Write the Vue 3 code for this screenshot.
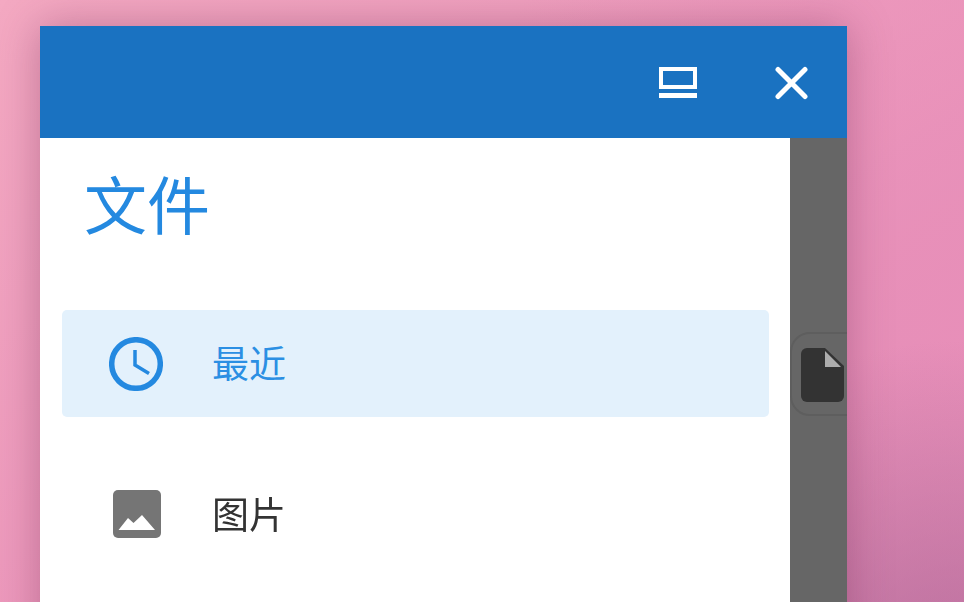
<script setup>
const items = [
  { label: "最近", active: true, icon: "clock" },
  { label: "图片", active: false, icon: "image" },
];
</script>

<template>
  <div class="desktop">
    <div class="window">
      <header class="titlebar">
        <button class="bar-btn dock" aria-label="dock">
          <svg width="40" height="34" viewBox="0 0 40 34" fill="none" stroke="#fff">
            <rect x="3" y="3" width="34" height="18" stroke-width="4" />
            <path d="M1 29.5h38" stroke-width="5" />
          </svg>
        </button>
        <button class="bar-btn close" aria-label="close">
          <svg width="34" height="34" viewBox="0 0 34 34" fill="none" stroke="#fff" stroke-width="5" stroke-linecap="round">
            <path d="M4 3.500l27 27M31 3.500L4 30.500" />
          </svg>
        </button>
      </header>
      <div class="body">
        <aside class="drawer">
          <h1 class="title">文件</h1>
          <ul class="menu">
            <li v-for="item in items" :key="item.label" class="row" :class="{ active: item.active }">
              <svg v-if="item.icon === 'clock'" class="icon" width="54" height="54" viewBox="0 0 54 54" fill="none" stroke="#2489e0">
                <circle cx="27" cy="27" r="24.3" stroke-width="5.500" />
                <path d="M26 13v15l14 8.500" stroke-width="3.500" />
              </svg>
              <svg v-else class="icon" width="54" height="54" viewBox="0 0 54 54">
                <rect x="4" y="2" width="48" height="48" rx="5" fill="#757575" />
                <path d="M9.500 42l9.500-12 5.500 5 8.500-8 13 15z" fill="#fff" />
              </svg>
              <span class="label">{{ item.label }}</span>
            </li>
          </ul>
        </aside>
        <main class="pane">
          <div class="file-card">
            <svg width="44" height="54" viewBox="0 0 44 54">
              <path d="M6 0h18l19 18v30a6 6 0 0 1-6 6H6a6 6 0 0 1-6-6V6a6 6 0 0 1 6-6z" fill="#333" />
              <path d="M24 3l16 16H24z" fill="#adadad" />
            </svg>
          </div>
        </main>
      </div>
    </div>
  </div>
</template>

<style>
html, body {
  margin: 0;
  overflow: hidden;
}
</style>

<style scoped>
.desktop {
  width: 964px;
  height: 602px;
  box-sizing: border-box;
  padding: 26px 117px 0 40px;
  overflow: hidden;
  background: radial-gradient(circle at 960px 700px, rgba(176, 104, 152, 0.8) 0, rgba(176, 104, 152, 0) 360px),
    radial-gradient(circle at 1000px 330px, #e88fb9 0%, rgba(232, 143, 185, 0) 55%),
    linear-gradient(150deg, #f4a9c2 0%, #ec98bc 55%, #d584ae 100%);
  font-family: "Liberation Sans", "Noto Sans CJK SC", sans-serif;
}
.window {
  width: 807px;
  height: 640px;
  box-shadow: 0 0 40px rgba(110, 40, 80, 0.38);
  display: flex;
  flex-direction: column;
  filter: blur(0.5px);
}
.titlebar {
  height: 112px;
  flex: none;
  background: #1a72c1;
  display: flex;
  justify-content: flex-end;
  align-items: center;
  padding-right: 39px;
}
.bar-btn {
  padding: 0;
  border: 0;
  background: none;
  display: flex;
}
.dock {
  margin-right: 76px;
  margin-top: 2px;
}
.close {
  margin-top: 2px;
}
.body {
  flex: 1;
  display: flex;
  min-height: 0;
}
.drawer {
  width: 750px;
  flex: none;
  background: #fff;
  box-sizing: border-box;
  padding: 0 21px 0 22px;
}
.title {
  margin: 0;
  padding: 31px 0 0 22px;
  height: 172px;
  box-sizing: border-box;
  font-size: 63px;
  line-height: 76px;
  font-weight: 400;
  color: #2489e0;
}
.menu {
  list-style: none;
  margin: 0;
  padding: 0;
  display: flex;
  flex-direction: column;
  gap: 44px;
}
.row {
  height: 107px;
  border-radius: 5px;
  display: flex;
  align-items: center;
  padding-left: 47px;
  color: #333;
}
.row.active {
  background: #e3f1fc;
  color: #2b8fe3;
}
.icon {
  flex: none;
}
.label {
  margin-left: 49px;
  padding-top: 4px;
  font-size: 37px;
  line-height: 44px;
}
.pane {
  flex: 1;
  background: #666;
  overflow: hidden;
  padding-top: 194px;
}
.file-card {
  width: 90px;
  height: 84px;
  box-sizing: border-box;
  border: 2px solid #5e5e5e;
  border-radius: 20px;
  padding: 14px 0 0 9px;
}
</style>
